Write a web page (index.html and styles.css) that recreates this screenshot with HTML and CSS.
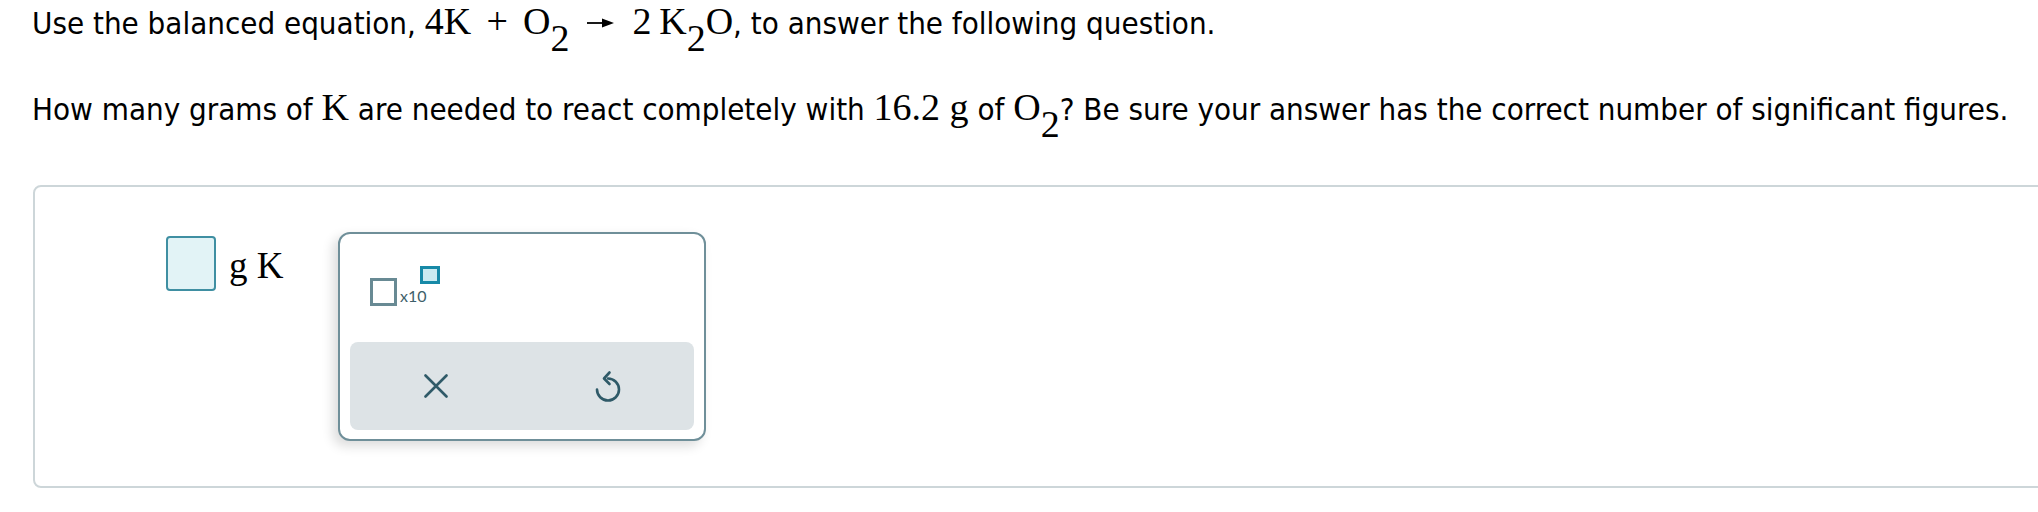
FILE: index.html
```html
<!DOCTYPE html>
<html>
<head>
<meta charset="utf-8">
<link rel="stylesheet" href="styles.css">
</head>
<body>
<div class="page">
  <p class="q q1">Use the balanced equation, <span class="m">4K<span class="op">+</span>O<sub>2</sub><span class="arrow"><svg width="27" height="12" viewBox="0 0 27 12"><line x1="0" y1="6" x2="18" y2="6" stroke="#000" stroke-width="1.8"/><polygon points="15,1.5 27,6 15,10.5" fill="#000"/></svg></span>2<span class="thin"></span>K<sub>2</sub>O</span>, to answer the following question.</p>
  <p class="q q2">How many grams of <span class="m">K</span> are needed to react completely with <span class="m">16.2 g</span> of <span class="m">O<sub>2</sub></span>? Be sure your answer has the correct number of significant figures.</p>
  <div class="answer-box">
    <div class="answer-row">
      <span class="input"></span>
      <span class="unit">g K</span>
      <div class="palette">
        <div class="palette-body">
          <div class="sci">
            <span class="sq-base"></span>
            <span class="x10">x10</span>
            <span class="sq-exp"></span>
          </div>
        </div>
        <div class="toolbar">
          <button class="tb-btn" aria-label="Clear">
            <svg width="24" height="24" viewBox="0 0 24 24"><path d="M1.5 1.5 L22.5 22.5 M22.5 1.5 L1.5 22.5" stroke="#2f5a68" stroke-width="2.6" stroke-linecap="round" fill="none"/></svg>
          </button>
          <button class="tb-btn" aria-label="Undo">
            <svg width="26" height="32" viewBox="0 0 26 32"><path d="M13 8.5 A11 11 0 1 1 2 19.5" stroke="#2f5a68" stroke-width="2.6" stroke-linecap="round" fill="none"/><path d="M14.5 2.5 L9 8.5 L14.5 14" stroke="#2f5a68" stroke-width="2.6" stroke-linecap="round" stroke-linejoin="round" fill="none"/></svg>
          </button>
        </div>
      </div>
    </div>
  </div>
</div>
</body>
</html>
```
FILE: styles.css
```css
html { overflow: hidden; }
body {
  margin: 0;
  background: #fff;
  color: #000;
  font-family: "DejaVu Sans Condensed", "DejaVu Sans", sans-serif;
}
.page { padding: 1px 0 0 32px; }
.q {
  margin: 0;
  font-size: 31px;
  line-height: 44px;
  white-space: nowrap;
}
.q2 { margin-top: 42px; }
.m {
  font-family: "Liberation Serif", serif;
  font-size: 38px;
  line-height: 1;
}
.m sub {
  font-size: 100%;
  vertical-align: -0.45em;
  line-height: 0;
}
.op { margin: 0 0.4em; }
.arrow { display: inline-block; margin: 0 0.5em 0 0.45em; vertical-align: 0.14em; line-height: 0; }
.thin { display: inline-block; width: 0.2em; }
.answer-box {
  margin: 54px 0 0 1px;
  width: 2100px;
  height: 303px;
  box-sizing: border-box;
  border: 2px solid #cdd6d9;
  border-radius: 8px;
  padding: 45px 0 0 131px;
}
.answer-row { display: flex; align-items: flex-start; }
.input {
  width: 50px;
  height: 55px;
  box-sizing: border-box;
  border: 2px solid #3f8fa2;
  background: #e2f3f6;
  border-radius: 4px;
  margin-top: 4px;
}
.unit {
  font-family: "Liberation Serif", serif;
  font-size: 37px;
  line-height: 1;
  margin: 15px 0 0 13px;
  width: 109px;
}
.palette {
  width: 368px;
  height: 209px;
  box-sizing: border-box;
  border: 2px solid #6f8f99;
  border-radius: 12px;
  background: #fff;
  box-shadow: -5px 5px 12px rgba(0, 0, 0, 0.14);
  padding: 0 10px 9px;
  display: flex;
  flex-direction: column;
}
.palette-body { flex: 1; padding: 32px 0 0 20px; }
.sci { display: flex; align-items: flex-start; }
.sq-base {
  width: 27px;
  height: 28px;
  box-sizing: border-box;
  border: 3px solid #688a94;
  margin-top: 12px;
}
.x10 {
  font-family: Lato, "Open Sans", sans-serif;
  font-size: 16px;
  line-height: 1;
  color: #3e5f6a;
  margin: 22px 0 0 3px;
}
.sq-exp {
  width: 20px;
  height: 18px;
  box-sizing: border-box;
  border: 3px solid #1789a7;
  background: #cbebf1;
  margin-left: -7px;
}
.toolbar {
  height: 88px;
  background: #dde3e6;
  border-radius: 8px;
  display: flex;
}
.tb-btn {
  flex: 1;
  display: flex;
  align-items: center;
  justify-content: center;
  border: 0;
  background: none;
  padding: 0;
}
```
